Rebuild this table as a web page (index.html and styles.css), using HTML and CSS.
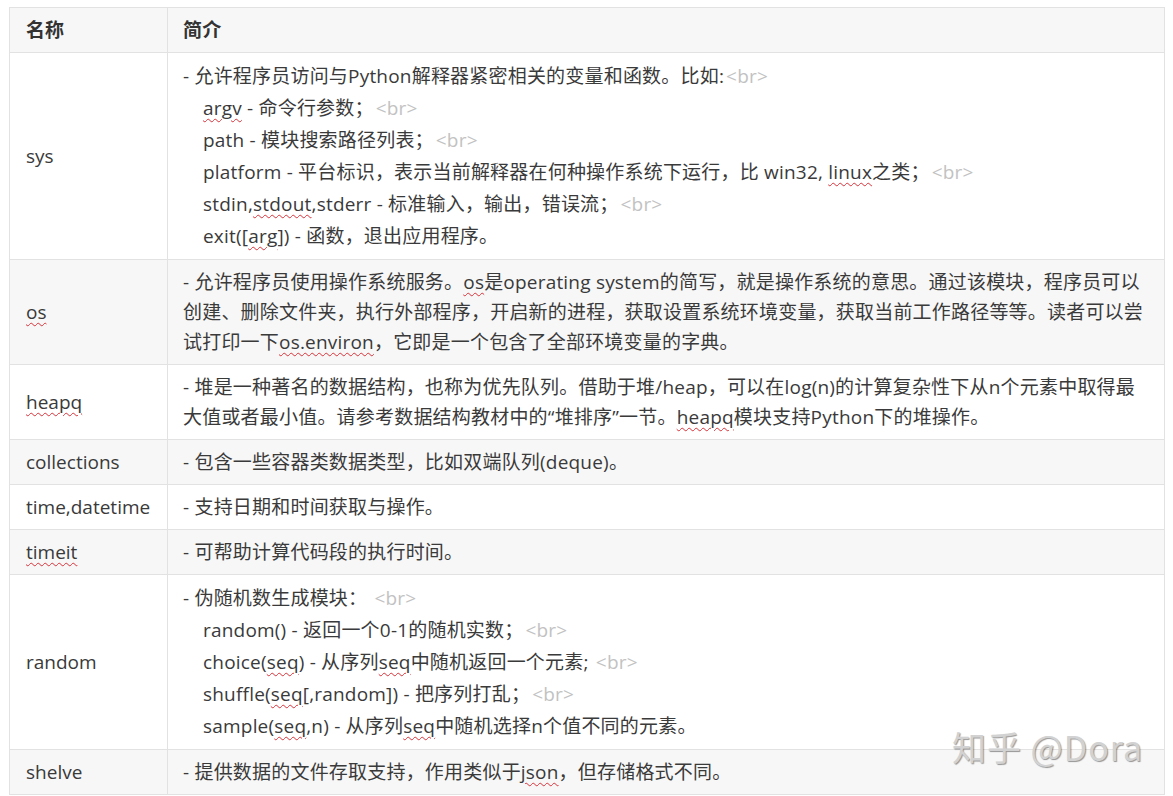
FILE: index.html
```html
<!DOCTYPE html>
<html>
<head>
  <title>Python 常用模块</title>
  <meta charset="UTF-8">
  <meta name="viewport" content="width=device-width, initial-scale=1.0">
  <link rel="stylesheet" href="styles.css">
</head>
<body>
  <div id="page">
    <table class="modules">
      <thead>
        <tr>
          <th class="name">名称</th>
          <th>简介</th>
        </tr>
      </thead>
      <tbody>
        <tr>
          <td class="name">sys</td>
          <td class="list">
            <div>- 允许程序员访问与Python解释器紧密相关的变量和函数。比如:<span class="br">&lt;br&gt;</span></div>
            <div class="sub"><span class="typo">argv</span> - 命令行参数；<span class="br">&lt;br&gt;</span></div>
            <div class="sub">path - 模块搜索路径列表；<span class="br">&lt;br&gt;</span></div>
            <div class="sub">platform - 平台标识，表示当前解释器在何种操作系统下运行，比 win32, <span class="typo">linux</span>之类；<span class="br">&lt;br&gt;</span></div>
            <div class="sub">stdin,<span class="typo">stdout</span>,stderr - 标准输入，输出，错误流；<span class="br">&lt;br&gt;</span></div>
            <div class="sub">exit([<span class="typo">arg</span>]) - 函数，退出应用程序。</div>
          </td>
        </tr>
        <tr>
          <td class="name"><span class="typo">os</span></td>
          <td>- 允许程序员使用操作系统服务。<span class="typo">os</span>是operating system的简写，就是操作系统的意思。通过该模块，程序员可以创建、删除文件夹，执行外部程序，开启新的进程，获取设置系统环境变量，获取当前工作路径等等。读者可以尝试打印一下<span class="typo">os.environ</span>，它即是一个包含了全部环境变量的字典。</td>
        </tr>
        <tr>
          <td class="name"><span class="typo">heapq</span></td>
          <td>- 堆是一种著名的数据结构，也称为优先队列。借助于堆/heap，可以在log(n)的计算复杂性下从n个元素中取得最大值或者最小值。请参考数据结构教材中的“堆排序”一节。<span class="typo">heapq</span>模块支持Python下的堆操作。</td>
        </tr>
        <tr>
          <td class="name">collections</td>
          <td>- 包含一些容器类数据类型，比如双端队列(deque)。</td>
        </tr>
        <tr>
          <td class="name">time,datetime</td>
          <td>- 支持日期和时间获取与操作。</td>
        </tr>
        <tr>
          <td class="name"><span class="typo">timeit</span></td>
          <td>- 可帮助计算代码段的执行时间。</td>
        </tr>
        <tr>
          <td class="name">random</td>
          <td class="list">
            <div>- 伪随机数生成模块： <span class="br">&lt;br&gt;</span></div>
            <div class="sub">random() - 返回一个0-1的随机实数；<span class="br">&lt;br&gt;</span></div>
            <div class="sub">choice(<span class="typo">seq</span>) - 从序列<span class="typo">seq</span>中随机返回一个元素; <span class="br">&lt;br&gt;</span></div>
            <div class="sub">shuffle(<span class="typo">seq</span>[,random]) - 把序列打乱；<span class="br">&lt;br&gt;</span></div>
            <div class="sub">sample(<span class="typo">seq</span>,n) - 从序列<span class="typo">seq</span>中随机选择n个值不同的元素。</div>
          </td>
        </tr>
        <tr>
          <td class="name">shelve</td>
          <td>- 提供数据的文件存取支持，作用类似于<span class="typo">json</span>，但存储格式不同。</td>
        </tr>
      </tbody>
    </table>

    <div class="watermark">知乎 @Dora</div>
  </div>
</body>
</html>
```

FILE: styles.css
```css
body {
  margin: 0;
  background-color: #fff;
  font-family: 'Open Sans', 'Noto Sans CJK SC', sans-serif;
  color: #3a3a3a;
  overflow: hidden;
}

#page {
  position: relative;
  padding: 7px 8px 0 9px;
}

.modules {
  width: 1156px;
  border-collapse: collapse;
  table-layout: fixed;
  font-size: 19px;
  line-height: 30px;
  letter-spacing: 0.2px;
}

.modules th,
.modules td {
  border: 1px solid #e2e2e2;
  padding: 7px 16px 7px 15px;
  text-align: left;
  vertical-align: middle;
}

.modules th {
  background-color: #f7f7f7;
  font-weight: bold;
  color: #333;
}

.modules .name {
  width: 125px;
  padding-left: 16px;
  padding-right: 16px;
  letter-spacing: 0;
  white-space: nowrap;
}

.modules tbody tr:nth-child(even) {
  background-color: #f7f7f7;
}

.list {
  line-height: 32px;
}

.list .sub {
  padding-left: 20px;
}

.br {
  color: #c2c2c2;
  margin-left: 2px;
}

.typo {
  text-decoration: underline wavy #d9323a;
  text-decoration-thickness: 1px;
  text-underline-offset: 3px;
}

/* водяной знак в углу */
.watermark {
  position: absolute;
  left: 952px;
  top: 722px;
  font-size: 34px;
  line-height: 50px;
  color: #d2d2d2;
  text-shadow: 1px 1px 1px rgba(0, 0, 0, 0.4);
  font-family: 'Noto Sans CJK SC', 'Open Sans', sans-serif;
  letter-spacing: 1px;
}
```
